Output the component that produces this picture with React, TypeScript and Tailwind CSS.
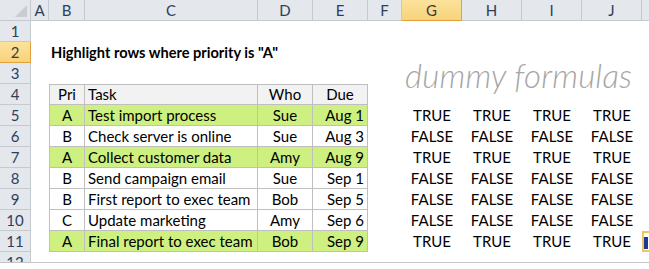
import React from 'react';

const cols = ['A', 'B', 'C', 'D', 'E', 'F', 'G', 'H', 'I', 'J', ''];
const widths = ['w-[18px]', 'w-[36px]', 'w-[173px]', 'w-[55px]', 'w-[55px]', 'w-[34px]', 'w-[60px]', 'w-[60px]', 'w-[60px]', 'w-[60px]', 'w-[60px]'];

const tasks = [
    { pri: 'A', task: 'Test import process', who: 'Sue', due: 'Aug 1' },
    { pri: 'B', task: 'Check server is online', who: 'Sue', due: 'Aug 3' },
    { pri: 'A', task: 'Collect customer data', who: 'Amy', due: 'Aug 9' },
    { pri: 'B', task: 'Send campaign email', who: 'Sue', due: 'Sep 1' },
    { pri: 'B', task: 'First report to exec team', who: 'Bob', due: 'Sep 5' },
    { pri: 'C', task: 'Update marketing', who: 'Amy', due: 'Sep 6' },
    { pri: 'A', task: 'Final report to exec team', who: 'Bob', due: 'Sep 9' },
];

const font = "font-['Lato','Liberation_Sans',sans-serif]";
const tb = 'border-r border-b border-[#bfbfbf]';

function RowHeader({ n, selected }: { n: number; selected?: boolean }) {
    return (
        <div
            className={`w-[31px] shrink-0 h-full flex items-center justify-center text-[15px] border-b border-r ${
                selected
                    ? 'bg-gradient-to-b from-[#fbe39b] to-[#f8d27a] border-[#e2a13c] text-[#3b3b3b]'
                    : 'bg-[#e4e7ec] border-[#c5cad1] text-[#2d3f5c]'
            }`}
        >
            {n}
        </div>
    );
}

export default function App() {
    return (
        <div className={`w-[649px] h-[269px] overflow-hidden bg-white text-black ${font}`}>
            {/* column headers */}
            <div className="flex h-[21px]">
                <div className="w-[31px] shrink-0 bg-[#e4e7ec] border-r border-b border-[#c5cad1] flex items-end justify-end p-[3px]">
                    <div className="w-0 h-0 border-l-[12px] border-l-transparent border-b-[12px] border-b-[#c9ccd1]" />
                </div>
                {cols.map((c, i) => (
                    <div
                        key={i}
                        className={`${widths[i]} shrink-0 flex items-center justify-center text-[15px] border-r border-b ${
                            c === 'G'
                                ? 'bg-gradient-to-b from-[#fbe39b] to-[#f8d27a] border-[#e2a13c] text-[#3b3b3b]'
                                : 'bg-[#e4e7ec] border-[#c5cad1] text-[#2d3f5c]'
                        }`}
                    >
                        {c}
                    </div>
                ))}
            </div>

            <div className="flex h-[21px]"><RowHeader n={1} /></div>
            <div className="flex h-[21px]">
                <RowHeader n={2} selected />
                <div className="w-[18px] shrink-0" />
                <div className="pl-[2px] text-[14.6px] font-bold whitespace-nowrap flex items-center">Highlight rows where priority is "A"</div>
            </div>
            <div className="flex h-[21px]">
                <RowHeader n={3} />
                <div className="w-[374px] shrink-0" />
                <div className="text-[#a6a6a6] text-[33px] italic font-light leading-none whitespace-nowrap -mt-[4px] tracking-[0.2px]">dummy formulas</div>
            </div>

            {/* table header */}
            <div className="flex h-[21px] text-[15px]">
                <RowHeader n={4} />
                <div className="w-[18px] shrink-0" />
                <div className={`w-[36px] shrink-0 flex items-center justify-center bg-[#f2f2f2] border-l border-t ${tb}`}>Pri</div>
                <div className={`w-[173px] shrink-0 flex items-center pl-[3px] bg-[#f2f2f2] border-t ${tb}`}>Task</div>
                <div className={`w-[55px] shrink-0 flex items-center justify-center bg-[#f2f2f2] border-t ${tb}`}>Who</div>
                <div className={`w-[55px] shrink-0 flex items-center justify-center bg-[#f2f2f2] border-t ${tb}`}>Due</div>
            </div>

            {tasks.map((t, r) => {
                const hi = t.pri === 'A';
                const bg = hi ? 'bg-[#cdf080]' : 'bg-white';
                const val = hi ? 'TRUE' : 'FALSE';
                return (
                    <div key={r} className="flex h-[21px] text-[15px]">
                        <RowHeader n={r + 5} />
                        <div className="w-[18px] shrink-0" />
                        <div className={`w-[36px] shrink-0 flex items-center justify-center border-l ${bg} ${tb}`}>{t.pri}</div>
                        <div className={`w-[173px] shrink-0 flex items-center pl-[3px] whitespace-nowrap ${bg} ${tb}`}>{t.task}</div>
                        <div className={`w-[55px] shrink-0 flex items-center justify-center ${bg} ${tb}`}>{t.who}</div>
                        <div className={`w-[55px] shrink-0 flex items-center justify-end pr-[3px] ${bg} ${tb}`}>{t.due}</div>
                        <div className="w-[34px] shrink-0" />
                        {[0, 1, 2, 3].map((k) => (
                            <div key={k} className="w-[60px] shrink-0 flex items-center justify-center">{val}</div>
                        ))}
                        {r === 6 && (
                            <div className="w-[7px] shrink-0 border-2 border-r-0 border-[#e8c766] flex items-center">
                                <div className="w-[4px] h-[12px] bg-[#1f3a93] mt-[2px]" />
                            </div>
                        )}
                    </div>
                );
            })}

            <div className="flex h-[10px] overflow-hidden">
                <div className="w-[31px] shrink-0 h-[21px] bg-[#e4e7ec] border-r border-[#c5cad1] flex items-center justify-center text-[15px] text-[#2d3f5c]">12</div>
            </div>
            <div className="h-[7px] border-t border-[#c6c6c6] bg-white" />
        </div>
    );
}
